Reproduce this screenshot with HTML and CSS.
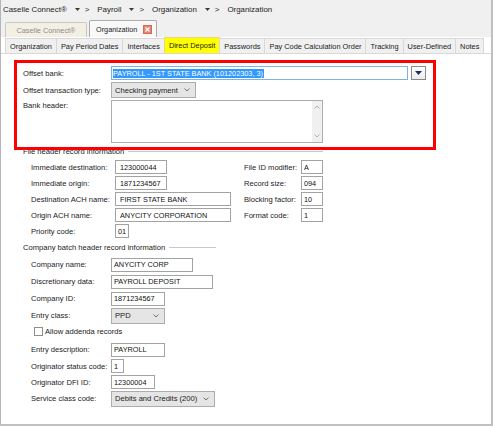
FILE: index.html
```html
<!DOCTYPE html>
<html lang="en">
<head>
    <meta charset="UTF-8">
    <meta name="viewport" content="width=device-width, initial-scale=1.0">
    <title>Organization - Direct Deposit</title>
    <link rel="stylesheet" href="styles.css">
</head>
<body>

    <div class="window">
        <div class="crumbs">
            <span>Caselle Connect®</span>
            <svg class="crumb-caret" width="5" height="3" viewBox="0 0 5 3"><polygon points="0,0 5,0 2.5,3" fill="#3a3a3a"/></svg>
            <span class="crumb-sep">&gt;</span>
            <span>Payroll</span>
            <svg class="crumb-caret" width="5" height="3" viewBox="0 0 5 3"><polygon points="0,0 5,0 2.5,3" fill="#3a3a3a"/></svg>
            <span class="crumb-sep">&gt;</span>
            <span>Organization</span>
            <svg class="crumb-caret" width="5" height="3" viewBox="0 0 5 3"><polygon points="0,0 5,0 2.5,3" fill="#3a3a3a"/></svg>
            <span class="crumb-sep">&gt;</span>
            <span>Organization</span>
        </div>

        <div class="doc-tabs">
            <div class="doc-tab">Caselle Connect®</div>
            <div class="doc-tab active">
                <span>Organization</span>
                <span class="close">
                    <svg width="5" height="5" viewBox="0 0 5 5"><path d="M0.5 0.5 L4.5 4.5 M4.5 0.5 L0.5 4.5" stroke="#fff" stroke-width="1.3"/></svg>
                </span>
            </div>
        </div>

        <div class="sub-tabs">
            <div class="sub-tab">Organization</div>
            <div class="sub-tab">Pay Period Dates</div>
            <div class="sub-tab">Interfaces</div>
            <div class="sub-tab current">Direct Deposit</div>
            <div class="sub-tab">Passwords</div>
            <div class="sub-tab">Pay Code Calculation Order</div>
            <div class="sub-tab">Tracking</div>
            <div class="sub-tab">User-Defined</div>
            <div class="sub-tab">Notes</div>
        </div>

        <div class="panel">
            <div class="callout"></div>

            <div class="top-form">
                <label>Offset bank:</label>
                <div class="combo">
                    <div class="combo-input"><span class="selected">PAYROLL - 1ST STATE BANK (101202303, 3)</span></div>
                    <div class="combo-button">
                        <svg width="7" height="4" viewBox="0 0 7 4"><polygon points="0,0 7,0 3.5,4" fill="#1d2a6b"/></svg>
                    </div>
                </div>

                <label>Offset transaction type:</label>
                <div class="select w85">
                    <span>Checking payment</span>
                    <svg width="6" height="4" viewBox="0 0 6 4"><polyline points="0.5,0.5 3,3 5.5,0.5" fill="none" stroke="#666" stroke-width="0.9"/></svg>
                </div>

                <label class="top">Bank header:</label>
                <div class="memo">
                    <div class="memo-scroll">
                        <svg width="6" height="4" viewBox="0 0 6 4"><polyline points="0.5,3.5 3,1 5.5,3.5" fill="none" stroke="#a8a8a8" stroke-width="0.9"/></svg>
                        <svg width="6" height="4" viewBox="0 0 6 4"><polyline points="0.5,0.5 3,3 5.5,0.5" fill="none" stroke="#a8a8a8" stroke-width="0.9"/></svg>
                    </div>
                </div>
            </div>

            <div class="group file-group">
                <div class="group-title">File header record information</div>
                <div class="file-header">
                    <div class="rows file-left">
                        <div class="row"><label>Immediate destination:</label><input class="field wide-pad w52" value="123000044" readonly></div>
                        <div class="row"><label>Immediate origin:</label><input class="field wide-pad w52" value="1871234567" readonly></div>
                        <div class="row"><label>Destination ACH name:</label><input class="field wide-pad w116" value="FIRST STATE BANK" readonly></div>
                        <div class="row"><label>Origin ACH name:</label><input class="field wide-pad w116" value="ANYCITY CORPORATION" readonly></div>
                        <div class="row"><label>Priority code:</label><input class="field w14" value="01" readonly></div>
                    </div>
                    <div class="rows file-right">
                        <div class="row"><label>File ID modifier:</label><input class="field w22" value="A" readonly></div>
                        <div class="row"><label>Record size:</label><input class="field w22" value="094" readonly></div>
                        <div class="row"><label>Blocking factor:</label><input class="field w22" value="10" readonly></div>
                        <div class="row"><label>Format code:</label><input class="field w22" value="1" readonly></div>
                    </div>
                </div>
            </div>

            <div class="group company-group">
                <div class="group-title">Company batch header record information</div>
                <div class="rows company">
                    <div class="row"><label>Company name:</label><input class="field w82" value="ANYCITY CORP" readonly></div>
                    <div class="row"><label>Discretionary data:</label><input class="field w102" value="PAYROLL DEPOSIT" readonly></div>
                    <div class="row"><label>Company ID:</label><input class="field w54" value="1871234567" readonly></div>
                    <div class="row">
                        <label>Entry class:</label>
                        <div class="select w54">
                            <span>PPD</span>
                            <svg width="6" height="4" viewBox="0 0 6 4"><polyline points="0.5,0.5 3,3 5.5,0.5" fill="none" stroke="#666" stroke-width="0.9"/></svg>
                        </div>
                    </div>
                    <div class="row check-row">
                        <input type="checkbox" class="check" id="addenda">
                        <label for="addenda">Allow addenda records</label>
                    </div>
                    <div class="row"><label>Entry description:</label><input class="field w54" value="PAYROLL" readonly></div>
                    <div class="row short"><label>Originator status code:</label><input class="field w13" value="1" readonly></div>
                    <div class="row short"><label>Originator DFI ID:</label><input class="field w44" value="12300004" readonly></div>
                    <div class="row">
                        <label>Service class code:</label>
                        <div class="select w104">
                            <span>Debits and Credits (200)</span>
                            <svg width="6" height="4" viewBox="0 0 6 4"><polyline points="0.5,0.5 3,3 5.5,0.5" fill="none" stroke="#666" stroke-width="0.9"/></svg>
                        </div>
                    </div>
                </div>
            </div>
        </div>
    </div>

</body>
</html>
```

FILE: styles.css
```css
body {
    margin: 0;
    font-family: 'Liberation Sans', Arial, sans-serif;
    font-size: 7.6px;
    color: #1b1b1b;
    background: #fff;
}

.window {
    width: 493px;
    height: 426px;
    box-sizing: border-box;
    border-left: 1px solid #b5b5b5;
    border-right: 2px solid #c0c0c0;
    border-bottom: 2px solid #c0c0c0;
    display: flex;
    flex-direction: column;
    overflow: hidden;
}

/* breadcrumb */
.crumbs {
    height: 19px;
    background: #f0f0f0;
    display: flex;
    align-items: center;
    padding-left: 2px;
    font-size: 7.9px;
    color: #222;
}

.crumb-caret {
    margin: 0 5px 0 8px;
}

.crumb-sep {
    margin-right: 8px;
}

/* document tabs */
.doc-tabs {
    height: 18px;
    background: #f0f0f0;
    display: flex;
    align-items: flex-end;
    padding-left: 4px;
    gap: 2px;
}

.doc-tab {
    width: 82px;
    height: 15px;
    box-sizing: border-box;
    border: 1px solid #c8c8c8;
    border-bottom: none;
    border-radius: 2px 2px 0 0;
    background: #f4efe3;
    color: #8c8c8c;
    font-size: 7.3px;
    display: flex;
    align-items: center;
    justify-content: center;
}

.doc-tab.active {
    width: 68px;
    height: 17px;
    background: #f8f8f8;
    border-color: #ababab;
    color: #222;
    justify-content: flex-start;
    padding-left: 6px;
    gap: 6px;
}

.close {
    width: 9px;
    height: 9px;
    box-sizing: border-box;
    background: #e8836f;
    border: 1px solid #cf6c59;
    display: flex;
    align-items: center;
    justify-content: center;
}

/* page tabs */
.sub-tabs {
    height: 16px;
    display: flex;
    align-items: flex-end;
    padding-left: 4px;
    background: #fff;
}

.sub-tab {
    height: 15px;
    box-sizing: border-box;
    padding: 0 4px;
    border: 1px solid #d8d8d8;
    border-bottom: none;
    margin-right: -1px;
    background: #f0f0f0;
    font-size: 7.4px;
    white-space: nowrap;
    flex-shrink: 0;
    display: flex;
    align-items: center;
}

.sub-tab.current {
    height: 16px;
    background: #ffff00;
    border-color: #e0e070;
}

/* content */
.panel {
    flex: 1;
    position: relative;
    border-top: 1px solid #d8d8d8;
    padding: 12px 0 0 22px;
}

.callout {
    position: absolute;
    left: 13px;
    top: 6px;
    width: 422px;
    height: 90px;
    box-sizing: border-box;
    border: 3px solid #ff0000;
    pointer-events: none;
}

label {
    white-space: nowrap;
}

.top-form {
    display: grid;
    grid-template-columns: 88px auto;
    row-gap: 2px;
    align-items: center;
}

.top-form .top {
    align-self: start;
    margin-top: 1px;
}

.combo {
    display: flex;
    gap: 3px;
}

.combo-input {
    width: 297px;
    height: 14px;
    box-sizing: border-box;
    border: 1px solid #7db2e6;
    background: #fff;
    padding-left: 1px;
    display: flex;
    align-items: center;
}

.selected {
    background: #3399ff;
    color: #fff;
    font-size: 7.3px;
    line-height: 9px;
    padding-right: 1px;
}

.combo-button {
    width: 15px;
    height: 14px;
    box-sizing: border-box;
    border: 1px solid #8a8a8a;
    background: linear-gradient(#ffffff, #ececec);
    display: flex;
    align-items: center;
    justify-content: center;
}

.select {
    height: 16px;
    box-sizing: border-box;
    border: 1px solid #acacac;
    background: #e5e5e5;
    padding: 0 5px 0 3px;
    display: flex;
    align-items: center;
    justify-content: space-between;
}

.memo {
    width: 212px;
    height: 43px;
    box-sizing: border-box;
    border: 1px solid #abadb3;
    background: #fff;
    display: flex;
    justify-content: flex-end;
}

.memo-scroll {
    width: 10px;
    background: #f0f0f0;
    display: flex;
    flex-direction: column;
    align-items: center;
    justify-content: space-between;
    padding: 4px 0;
}

.group-title {
    height: 12px;
    margin-top: 2px;
    display: flex;
    align-items: center;
}

.group-title::after {
    content: '';
    flex: 1;
    border-top: 1px solid #c8c8c8;
    margin: 1px 0 0 4px;
}

.file-group {
    width: 300px;
}

.company-group {
    width: 193px;
}

.file-header {
    display: grid;
    grid-template-columns: 213px auto;
    margin-top: 2px;
    padding-left: 8px;
}

.rows {
    display: flex;
    flex-direction: column;
}

.row {
    height: 16px;
    display: flex;
    align-items: center;
}

.file-left label {
    width: 84px;
}

.file-right label {
    width: 57px;
}

.company {
    margin-top: 3px;
    padding-left: 8px;
}

.company .row {
    height: 17px;
}

.company .row.short {
    height: 16px;
}

.company label {
    width: 80px;
}

.company .check-row {
    padding-bottom: 3px;
    box-sizing: border-box;
}

.check {
    appearance: none;
    width: 9px;
    height: 9px;
    margin: 0 2px 0 3px;
    border: 1px solid #8e8e8e;
    background: #fff;
}

.field {
    height: 14px;
    box-sizing: border-box;
    border: 1px solid #a3a3a3;
    padding: 0 2px;
    margin: 0;
    font-family: inherit;
    font-size: 7.3px;
    color: #111;
    background: #fff;
    outline: none;
}

.field.wide-pad {
    padding-left: 4px;
}

.w13 { width: 13px; }
.w14 { width: 14px; }
.w22 { width: 22px; }
.w44 { width: 44px; }
.w52 { width: 52px; }
.w54 { width: 54px; }
.w82 { width: 82px; }
.w85 { width: 85px; }
.w102 { width: 102px; }
.w104 { width: 104px; }
.w116 { width: 116px; }
```
